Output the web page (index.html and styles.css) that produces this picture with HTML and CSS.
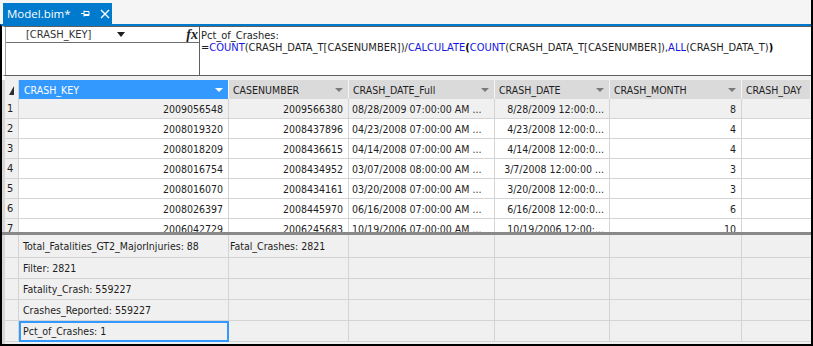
FILE: index.html
```html
<!DOCTYPE html>
<html>
<head>
<meta charset="utf-8">
<link rel="stylesheet" href="styles.css">
</head>
<body>
<div class="app">
  <div class="tabstrip">
    <div class="tab">
      <span class="tab-title">Model.bim*</span>
      <svg class="pin" width="9" height="9" viewBox="0 0 9 9"><path d="M0 4.5H3M3 1.5V7.5M3 2.5H8V6.5H3M3 5.5H8" fill="none" stroke="#fff" stroke-width="1"/></svg>
      <svg class="close" width="10" height="10" viewBox="0 0 10 10"><path d="M1 1L9 9M9 1L1 9" stroke="#fff" stroke-width="1.4"/></svg>
    </div>
  </div>
  <div class="doc">
    <div class="formula-bar">
      <div class="namebox">
        <div class="name-row">
          <span class="name">[CRASH_KEY]</span>
          <svg class="name-arrow" width="8" height="5" viewBox="0 0 8 5"><path d="M0 0H8L4 5Z" fill="#1e1e1e"/></svg>
          <span class="fx">fx</span>
        </div>
      </div>
      <div class="formula">
        <div>Pct_of_Crashes:</div>
        <div>=<span class="kw">COUNT</span>(CRASH_DATA_T[CASENUMBER])/<span class="kw">CALCULATE</span><b>(</b><span class="kw">COUNT</span>(CRASH_DATA_T[CASENUMBER]),<span class="kw">ALL</span>(CRASH_DATA_T)<b>)</b></div>
      </div>
    </div>
    <div class="gap"></div>
    <div class="grid">
      <div class="row head">
        <div class="c rh corner"><svg width="5" height="9" viewBox="0 0 5 9"><path d="M5 0V9H0Z" fill="#2b2b2b"/></svg></div>
        <div class="c c1 hsel"><span>CRASH_KEY</span><svg class="dd" width="8" height="4" viewBox="0 0 8 4"><path d="M0 0H8L4 4Z" fill="#fff"/></svg></div>
        <div class="c c2"><span>CASENUMBER</span><svg class="dd" width="8" height="4" viewBox="0 0 8 4"><path d="M0 0H8L4 4Z" fill="#7a7a7a"/></svg></div>
        <div class="c c3"><span>CRASH_DATE_Full</span><svg class="dd" width="8" height="4" viewBox="0 0 8 4"><path d="M0 0H8L4 4Z" fill="#7a7a7a"/></svg></div>
        <div class="c c4"><span>CRASH_DATE</span><svg class="dd" width="8" height="4" viewBox="0 0 8 4"><path d="M0 0H8L4 4Z" fill="#7a7a7a"/></svg></div>
        <div class="c c5"><span>CRASH_MONTH</span><svg class="dd" width="8" height="4" viewBox="0 0 8 4"><path d="M0 0H8L4 4Z" fill="#7a7a7a"/></svg></div>
        <div class="c c6"><span>CRASH_DAY</span></div>
      </div>
      <div class="row cur">
        <div class="c rh">1</div><div class="c c1 r">2009056548</div><div class="c c2 r">2009566380</div><div class="c c3">08/28/2009 07:00:00 AM ...</div><div class="c c4 r">8/28/2009 12:00:0...</div><div class="c c5 r">8</div><div class="c c6"></div>
      </div>
      <div class="row">
        <div class="c rh">2</div><div class="c c1 r">2008019320</div><div class="c c2 r">2008437896</div><div class="c c3">04/23/2008 07:00:00 AM ...</div><div class="c c4 r">4/23/2008 12:00:0...</div><div class="c c5 r">4</div><div class="c c6"></div>
      </div>
      <div class="row">
        <div class="c rh">3</div><div class="c c1 r">2008018209</div><div class="c c2 r">2008436615</div><div class="c c3">04/14/2008 07:00:00 AM ...</div><div class="c c4 r">4/14/2008 12:00:0...</div><div class="c c5 r">4</div><div class="c c6"></div>
      </div>
      <div class="row">
        <div class="c rh">4</div><div class="c c1 r">2008016754</div><div class="c c2 r">2008434952</div><div class="c c3">03/07/2008 08:00:00 AM ...</div><div class="c c4 r">3/7/2008 12:00:00 ...</div><div class="c c5 r">3</div><div class="c c6"></div>
      </div>
      <div class="row">
        <div class="c rh">5</div><div class="c c1 r">2008016070</div><div class="c c2 r">2008434161</div><div class="c c3">03/20/2008 07:00:00 AM ...</div><div class="c c4 r">3/20/2008 12:00:0...</div><div class="c c5 r">3</div><div class="c c6"></div>
      </div>
      <div class="row">
        <div class="c rh">6</div><div class="c c1 r">2008026397</div><div class="c c2 r">2008445970</div><div class="c c3">06/16/2008 07:00:00 AM ...</div><div class="c c4 r">6/16/2008 12:00:0...</div><div class="c c5 r">6</div><div class="c c6"></div>
      </div>
      <div class="row">
        <div class="c rh">7</div><div class="c c1 r">2006042729</div><div class="c c2 r">2006245683</div><div class="c c3">10/19/2006 07:00:00 AM ...</div><div class="c c4 r">10/19/2006 12:00:...</div><div class="c c5 r">10</div><div class="c c6"></div>
      </div>
    </div>
    <div class="splitter"></div>
    <div class="measures">
      <div class="row mfirst">
        <div class="c rh"></div><div class="c c1">Total_Fatalities_GT2_MajorInjuries: 88</div><div class="c c2">Fatal_Crashes: 2821</div><div class="c c3"></div><div class="c c4"></div><div class="c c5"></div><div class="c c6"></div>
      </div>
      <div class="row">
        <div class="c rh"></div><div class="c c1">Filter: 2821</div><div class="c c2"></div><div class="c c3"></div><div class="c c4"></div><div class="c c5"></div><div class="c c6"></div>
      </div>
      <div class="row">
        <div class="c rh"></div><div class="c c1">Fatality_Crash: 559227</div><div class="c c2"></div><div class="c c3"></div><div class="c c4"></div><div class="c c5"></div><div class="c c6"></div>
      </div>
      <div class="row">
        <div class="c rh"></div><div class="c c1">Crashes_Reported: 559227</div><div class="c c2"></div><div class="c c3"></div><div class="c c4"></div><div class="c c5"></div><div class="c c6"></div>
      </div>
      <div class="row">
        <div class="c rh"></div><div class="c c1 msel">Pct_of_Crashes: 1</div><div class="c c2"></div><div class="c c3"></div><div class="c c4"></div><div class="c c5"></div><div class="c c6"></div>
      </div>
    </div>
  </div>
</div>
</body>
</html>
```
FILE: styles.css
```css
* { box-sizing: border-box; }
html, body { margin: 0; padding: 0; }
body { width: 813px; height: 346px; overflow: hidden; background: #fff; }
.app {
  width: 813px; height: 346px;
  display: flex; flex-direction: column;
  border-right: 2px solid #000; border-bottom: 2px solid #000;
  background: #eeeef2;
  font-family: "DejaVu Sans", "Liberation Sans", sans-serif;
  font-stretch: condensed;
  font-size: 10.5px;
  color: #1e1e1e;
}
.tabstrip { height: 24px; padding: 3px 0 0 3px; background: #f5f5f5; display: flex; flex: none; }
.tab {
  width: 109px; height: 21px; background: #007acc; color: #fff;
  display: flex; align-items: center; padding-left: 4px;
}
.tab-title { font-family: "Open Sans", "Noto Sans", sans-serif; font-stretch: normal; font-size: 11.5px; width: 74px; }
.pin { margin-right: 10px; }
.doc {
  flex: 1; display: flex; flex-direction: column;
  border-top: 2px solid #007acc;
  border-left: 2px solid #000;
  min-height: 0;
}
.formula-bar {
  height: 50px; flex: none; display: flex; background: #fff;
  border-top: 1px solid #5f5f5f; border-bottom: 1px solid #5f5f5f;
  border-left: 3px solid #fff;
}
.namebox { width: 195px; border-right: 1px solid #5f5f5f; border-left: 1px solid #a0a0a0; }
.name-row { height: 16px; border-bottom: 1px solid #6f6f6f; display: flex; align-items: center; }
.name { margin-left: 20px; width: 91px; font-size: 11px; color: #333; }
.fx {
  margin-left: auto; margin-right: 1px;
  font-family: "Liberation Serif", serif; font-style: italic; font-weight: bold; font-size: 14px; font-stretch: normal;
  color: #1e1e1e; line-height: 14px;
}
.formula { flex: 1; padding: 3px 0 0 1px; font-size: 11px; line-height: 12px; color: #1e1e1e; }
.kw { color: #1515e0; }
.formula b { font-weight: bold; color: #000; }
.gap { height: 4px; flex: none; background: #f0f0f0; border-left: 3px solid #fff; }
.grid { height: 152px; flex: none; overflow: hidden; background: #fff; border-left: 3px solid #d7d7d7; }
.row { display: flex; height: 20px; }
.c {
  flex: none;
  height: 100%; border-right: 1px solid #d4d4d4; border-bottom: 1px solid #d4d4d4;
  display: flex; align-items: center; white-space: nowrap; overflow: hidden;
  padding: 0 4px 0 3px;
}
.rh { width: 14px; background: #f0f0f0; padding-left: 2px; font-size: 11px; }
.c1 { width: 210px; }
.c2 { width: 120px; }
.c3 { width: 146px; }
.c4 { width: 115px; }
.c5 { width: 132px; }
.c6 { flex: 1 1 0; min-width: 0; border-right: none; }
.r { justify-content: flex-end; padding-right: 5px; }
.head { height: 19px; }
.head .c { background: #dadada; border-right: 1px solid #f4f4f4; border-bottom: none; padding-left: 4px; padding-right: 5px; }
.head .c span { flex: 1; }
.head .corner { background: #f0f0f0; justify-content: flex-start; align-items: flex-end; padding: 0 0 4px 4px; border-right: 1px solid #d4d4d4; }
.head .hsel { background: #3399ff; color: #fff; padding-left: 5px; }
.dd { flex: none; }
.cur .c { background: #f0f0f0; }
.splitter { height: 3px; flex: none; background: #898989; }
.measures { flex: 1; background: #f0f0f0; overflow: hidden; border-left: 3px solid #d7d7d7; }
.measures .row { height: 21px; }
.measures .mfirst { height: 23px; }
.measures .c1 { padding-left: 4px; }
.measures .c2 { padding-left: 1px; }
.msel { outline: 2px solid #3399ff; outline-offset: -2px; }
```
